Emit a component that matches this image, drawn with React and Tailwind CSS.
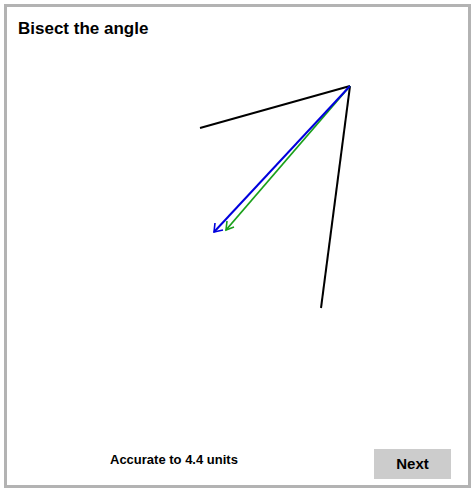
export default function App() {
  return (
    <div className="w-[474px] h-[491px] bg-white pt-[4px] pl-[4px]" style={{ fontFamily: '"Liberation Sans", Arial, sans-serif' }}>
      <div className="relative w-[467px] h-[484px] border-[3px] border-[#b3b3b3] flex flex-col">
        <svg className="absolute inset-0" width="461" height="478" viewBox="7 7 461 478">
          <line x1="200" y1="128" x2="350" y2="86" stroke="#000" strokeWidth="2" />
          <line x1="350" y1="86" x2="321" y2="308" stroke="#000" strokeWidth="2" />
          <line x1="350" y1="86" x2="226" y2="230" stroke="#1aa01a" strokeWidth="1.8" />
          <polyline points="227,221 226,230 234,227" fill="none" stroke="#1aa01a" strokeWidth="1.6" />
          <line x1="350" y1="86" x2="214" y2="232" stroke="#0000dd" strokeWidth="2" />
          <polyline points="215,223 214,232 223,230" fill="none" stroke="#0000dd" strokeWidth="1.6" />
        </svg>
        <div className="relative pl-[11px] pt-[11px] text-[17px] font-bold text-black leading-[21px]">Bisect the angle</div>
        <div className="flex-1" />
        <div className="relative flex items-center pb-[6px]">
          <div className="ml-[103px] text-[13px] font-bold text-black mt-[-8px]">Accurate to 4.4 units</div>
          <div className="ml-auto mr-[17px] w-[77px] h-[30px] bg-[#cccccc] flex items-center justify-center text-[15px] font-bold text-black">Next</div>
        </div>
      </div>
    </div>
  );
}
